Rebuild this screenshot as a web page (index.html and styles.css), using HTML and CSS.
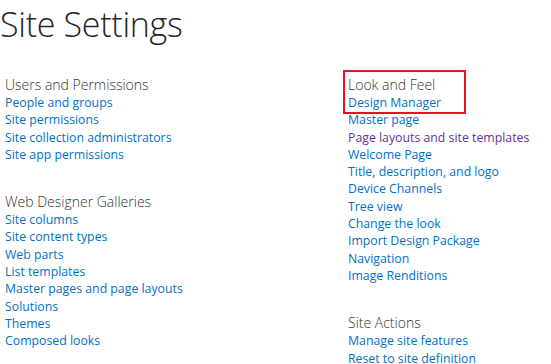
FILE: index.html
```html
<!DOCTYPE html>
<html>
<head>
<meta charset="utf-8">
<link rel="stylesheet" href="styles.css">
</head>
<body>
<h1 class="title">Site Settings</h1>
<div class="columns">
  <div class="col">
    <div class="group">
      <h2 class="group-title">Users and Permissions</h2>
      <ul class="links">
        <li><a href="#">People and groups</a></li>
        <li><a href="#">Site permissions</a></li>
        <li><a href="#">Site collection administrators</a></li>
        <li><a href="#">Site app permissions</a></li>
      </ul>
    </div>
    <div class="group">
      <h2 class="group-title">Web Designer Galleries</h2>
      <ul class="links">
        <li><a href="#">Site columns</a></li>
        <li><a href="#">Site content types</a></li>
        <li><a href="#">Web parts</a></li>
        <li><a href="#">List templates</a></li>
        <li><a href="#">Master pages and page layouts</a></li>
        <li><a href="#">Solutions</a></li>
        <li><a href="#">Themes</a></li>
        <li><a href="#">Composed looks</a></li>
      </ul>
    </div>
  </div>
  <div class="col col-right">
    <div class="group">
      <div class="highlight">
        <h2 class="group-title">Look and Feel</h2>
        <a href="#" class="link-single">Design Manager</a>
      </div>
      <ul class="links">
        <li><a href="#">Master page</a></li>
        <li><a href="#" class="visited">Page layouts and site templates</a></li>
        <li><a href="#">Welcome Page</a></li>
        <li><a href="#">Title, description, and logo</a></li>
        <li><a href="#">Device Channels</a></li>
        <li><a href="#">Tree view</a></li>
        <li><a href="#">Change the look</a></li>
        <li><a href="#">Import Design Package</a></li>
        <li><a href="#">Navigation</a></li>
        <li><a href="#">Image Renditions</a></li>
      </ul>
    </div>
    <div class="group">
      <h2 class="group-title">Site Actions</h2>
      <ul class="links">
        <li><a href="#">Manage site features</a></li>
        <li><a href="#">Reset to site definition</a></li>
      </ul>
    </div>
  </div>
</div>
</body>
</html>
```
FILE: styles.css
```css
html, body {
  margin: 0;
  padding: 0;
  background: #fff;
  overflow: hidden;
}
body {
  font-family: "Open Sans", "Noto Sans", sans-serif;
  width: 551px;
  height: 364px;
}
.title {
  margin: 0;
  padding: 2px 0 0 0;
  font-weight: 300;
  font-size: 34px;
  line-height: 44px;
  color: #262626;
  letter-spacing: -0.3px;
}
.columns {
  display: flex;
  padding: 30px 0 0 5px;
}
.col {
  width: 343px;
}
.col-right {
  width: auto;
}
.group {
  margin-bottom: 30px;
}
.group-title {
  margin: 0;
  font-size: 14px;
  font-weight: 300;
  color: #333;
  line-height: 18px;
}
.links {
  list-style: none;
  margin: 0;
  padding: 0;
}
.links li, .link-single {
  font-size: 12.3px;
  line-height: 17.3px;
  display: block;
}
a {
  color: #0072c6;
  text-decoration: none;
}
a.visited {
  color: #663399;
}
.highlight {
  box-sizing: border-box;
  width: 123px;
  margin: -6px 0 -2.4px -5px;
  padding: 4px 0 0.4px 3px;
  border: 2px solid #e81123;
}
```
